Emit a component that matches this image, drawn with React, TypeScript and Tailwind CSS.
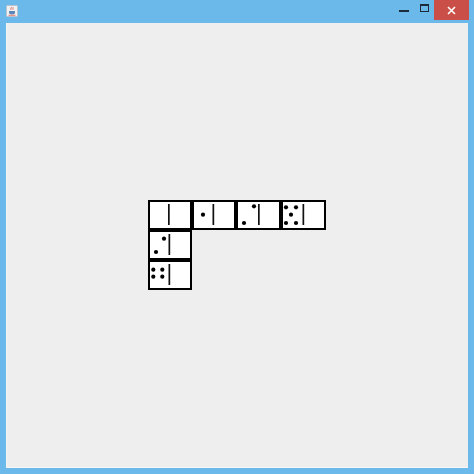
import React from "react";

type Pip = [number, number];

type Tile = { w: number; bar: number; pips: Pip[] };

// pip centres in the tile's local coordinates (inside the 2px border)
const row: Tile[] = [
  { w: 44, bar: 18, pips: [] },
  { w: 44, bar: 18.5, pips: [[9, 12.7]] },
  { w: 45, bar: 20, pips: [[16, 4.3], [6, 21]] },
  { w: 45, bar: 19.5, pips: [[3, 5.3], [13, 5.3], [8, 12.7], [3, 21], [13, 21]] },
];

const column: Tile[] = [
  { w: 44, bar: 18.5, pips: [[14, 6.7], [6, 20]] },
  { w: 44, bar: 18.5, pips: [[3.3, 7.7], [12.3, 7.7], [3.3, 14.7], [12.3, 14.7]] },
];

function Domino({ w, bar, pips }: Tile) {
  const inner = w - 4;
  return (
    <div
      className={`${w === 45 ? "w-[45px]" : "w-[44px]"} h-[30px] border-2 border-black bg-white shrink-0`}
    >
      <svg width={inner} height="26" viewBox={`0 0 ${inner} 26`} className="block">
        <rect x={bar} y="2" width="1.7" height="21" fill="#111" />
        {pips.map(([cx, cy], i) => (
          <circle key={i} cx={cx} cy={cy} r="2.1" fill="#000" />
        ))}
      </svg>
    </div>
  );
}

function JavaIcon() {
  return (
    <svg width="12" height="12" viewBox="0 0 12 12">
      <rect x="0.5" y="0.5" width="11" height="11" rx="1" fill="#eef0f2" stroke="#b9c3cc" />
      <path d="M5 2c1 1-1 1.5 0 2.8M7 2.3c.8.9-.8 1.3 0 2.3" stroke="#e0584a" strokeWidth="0.9" fill="none" />
      <path d="M3 6h6v1.5c0 1.3-1 2-3 2s-3-.7-3-2z" fill="#5b86b8" />
      <rect x="2.5" y="9.8" width="7" height="0.8" fill="#e0584a" />
    </svg>
  );
}

export default function App() {
  return (
    <div className="w-[474px] h-[474px] bg-[#6bb8ea] flex flex-col overflow-hidden">
      {/* title bar */}
      <div className="h-[23px] flex items-start shrink-0">
        <div className="pl-[6px] pt-[5px]">
          <JavaIcon />
        </div>
        <div className="flex-1" />
        <div className="w-[10px] h-[2px] bg-[#1c2b3a] mt-[10px] mr-[11px]" />
        <div className="w-[9px] h-[8px] border border-[#1c2b3a] border-t-2 mt-[4px] mr-[5px]" />
        <div className="w-[35px] h-[20px] bg-[#c94f48] mr-[5px] flex items-center justify-center">
          <svg width="9" height="9" viewBox="0 0 9 9">
            <path d="M1 1l7 7M8 1L1 8" stroke="#fff" strokeWidth="1.6" />
          </svg>
        </div>
      </div>

      {/* client area */}
      <div className="flex-1 mx-[6px] mb-[6px] bg-[#eeeeee] border-l border-b border-[#f6f6f6] pl-[141px] pt-[177px]">
        <div className="flex flex-col">
          <div className="flex">
            {row.map((t, i) => (
              <Domino key={i} {...t} />
            ))}
          </div>
          {column.map((t, i) => (
            <Domino key={i} {...t} />
          ))}
        </div>
      </div>
    </div>
  );
}
